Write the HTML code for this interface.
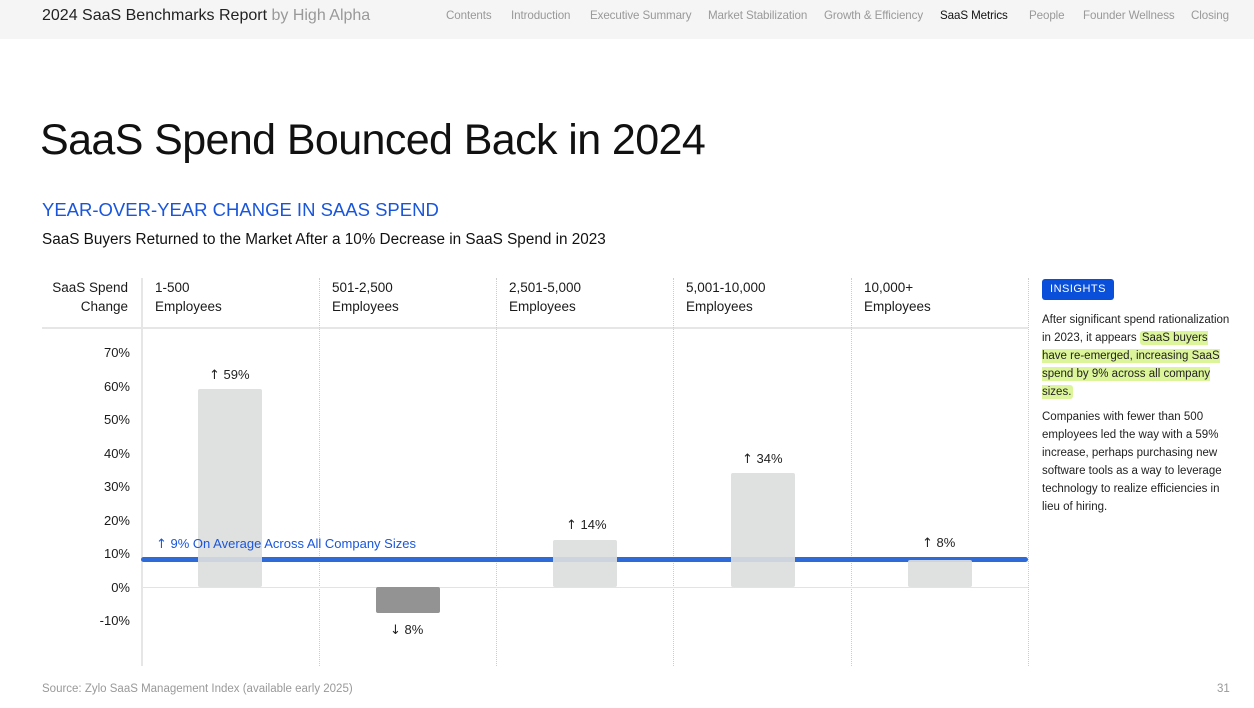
<!DOCTYPE html>
<html><head><meta charset="utf-8"><style>
*{margin:0;padding:0;box-sizing:border-box}
body{width:1254px;height:708px;background:#fff;font-family:"Liberation Sans",sans-serif;position:relative;overflow:hidden;color:#1a1a1a}
.a{position:absolute;white-space:nowrap}
.nav{position:absolute;left:0;top:0;width:1254px;height:39px;background:#f5f5f5}
.nl{font-size:11.6px;color:#999;top:9px;letter-spacing:-0.1px}
.hd{font-size:13.5px;line-height:19px;top:278px}
.yl{font-size:13px;right:1124px;text-align:right}
.bar{position:absolute;background:#dcdddd;border-radius:2px;width:64px}
.bl{font-size:13px;color:#222;z-index:3}
.ar{font-family:"DejaVu Sans",sans-serif;font-size:13px}
.vd{position:absolute;top:278px;height:388px;border-left:1px dotted #ccc}
</style></head><body>
<div class="nav"></div>
<div class="a" style="left:42px;top:7px;font-size:16px;color:#222">2024 SaaS Benchmarks Report <span style="color:#999">by High Alpha</span></div>
<div class="a nl" style="left:446px">Contents</div>
<div class="a nl" style="left:511px">Introduction</div>
<div class="a nl" style="left:590px">Executive Summary</div>
<div class="a nl" style="left:708px">Market Stabilization</div>
<div class="a nl" style="left:824px">Growth &amp; Efficiency</div>
<div class="a nl" style="left:940px;color:#111">SaaS Metrics</div>
<div class="a nl" style="left:1029px">People</div>
<div class="a nl" style="left:1083px">Founder Wellness</div>
<div class="a nl" style="left:1191px">Closing</div>

<div class="a" style="left:40px;top:116px;font-size:43px;letter-spacing:-0.6px;color:#111">SaaS Spend Bounced Back in 2024</div>
<div class="a" style="left:42px;top:199px;font-size:18.5px;color:#1a56db">YEAR-OVER-YEAR CHANGE IN SAAS SPEND</div>
<div class="a" style="left:42px;top:231px;font-size:15.3px;color:#111">SaaS Buyers Returned to the Market After a 10% Decrease in SaaS Spend in 2023</div>

<div class="a hd" style="right:1126px;text-align:right">SaaS Spend<br>Change</div>
<div class="a hd" style="left:155px">1-500<br>Employees</div>
<div class="a hd" style="left:332px">501-2,500<br>Employees</div>
<div class="a hd" style="left:509px">2,501-5,000<br>Employees</div>
<div class="a hd" style="left:686px">5,001-10,000<br>Employees</div>
<div class="a hd" style="left:864px">10,000+<br>Employees</div>
<div class="a" style="left:42px;top:327px;width:986px;height:2px;background:#e6e6e6"></div>
<div class="a" style="left:141px;top:278px;width:2px;height:388px;background:#e6e6e6"></div>
<div class="vd" style="left:319px"></div>
<div class="vd" style="left:496px"></div>
<div class="vd" style="left:673px"></div>
<div class="vd" style="left:851px"></div>
<div class="vd" style="left:1028px"></div>

<div class="a yl" style="top:345px">70%</div>
<div class="a yl" style="top:379px">60%</div>
<div class="a yl" style="top:412px">50%</div>
<div class="a yl" style="top:446px">40%</div>
<div class="a yl" style="top:479px">30%</div>
<div class="a yl" style="top:513px">20%</div>
<div class="a yl" style="top:546px">10%</div>
<div class="a yl" style="top:580px">0%</div>
<div class="a yl" style="top:613px">-10%</div>
<div class="a" style="left:143px;top:587px;width:885px;height:1px;background:#e3e3e3"></div>

<div class="a" style="left:141px;top:557px;width:887px;height:5px;background:#2f6ad9;border-radius:3px"></div>

<div class="bar" style="left:198px;top:389px;height:198px;opacity:.92"></div>
<div class="bar" style="left:376px;top:587px;height:26px;background:#939393"></div>
<div class="bar" style="left:553px;top:540px;height:47px;opacity:.92"></div>
<div class="bar" style="left:731px;top:473px;height:114px;opacity:.92"></div>
<div class="bar" style="left:908px;top:560px;height:27px;opacity:.92"></div>
<div class="a" style="left:156px;top:536px;font-size:13px;color:#1a56db;z-index:3"><span class="ar">↑</span> 9% On Average Across All Company Sizes</div>
<div class="a bl" style="left:209px;top:367px"><span class="ar">↑</span> 59%</div>
<div class="a bl" style="left:390px;top:622px"><span class="ar">↓</span> 8%</div>
<div class="a bl" style="left:566px;top:517px"><span class="ar">↑</span> 14%</div>
<div class="a bl" style="left:742px;top:451px"><span class="ar">↑</span> 34%</div>
<div class="a bl" style="left:922px;top:535px"><span class="ar">↑</span> 8%</div>

<div class="a" style="left:1042px;top:279px;width:72px;height:21px;background:#0a4fd9;border-radius:3px;color:#fff;font-size:11px;text-align:center;line-height:21px;letter-spacing:0.5px">INSIGHTS</div>
<div class="a" style="left:1042px;top:311px;width:188px;white-space:normal;font-size:11.5px;line-height:18px;color:#222">After significant spend rationalization in 2023, it appears <span style="background:#dcf59a;border-radius:3px;padding:1px 2px">SaaS buyers have re-emerged, increasing SaaS spend by 9% across all company sizes.</span></div>
<div class="a" style="left:1042px;top:408px;width:188px;white-space:normal;font-size:11.5px;line-height:18px;color:#222">Companies with fewer than 500 employees led the way with a 59% increase, perhaps purchasing new software tools as a way to leverage technology to realize efficiencies in lieu of hiring.</div>

<div class="a" style="left:42px;top:683px;font-size:11.5px;color:#999">Source: Zylo SaaS Management Index (available early 2025)</div>
<div class="a" style="left:1217px;top:683px;font-size:11.5px;color:#999">31</div>
</body></html>
